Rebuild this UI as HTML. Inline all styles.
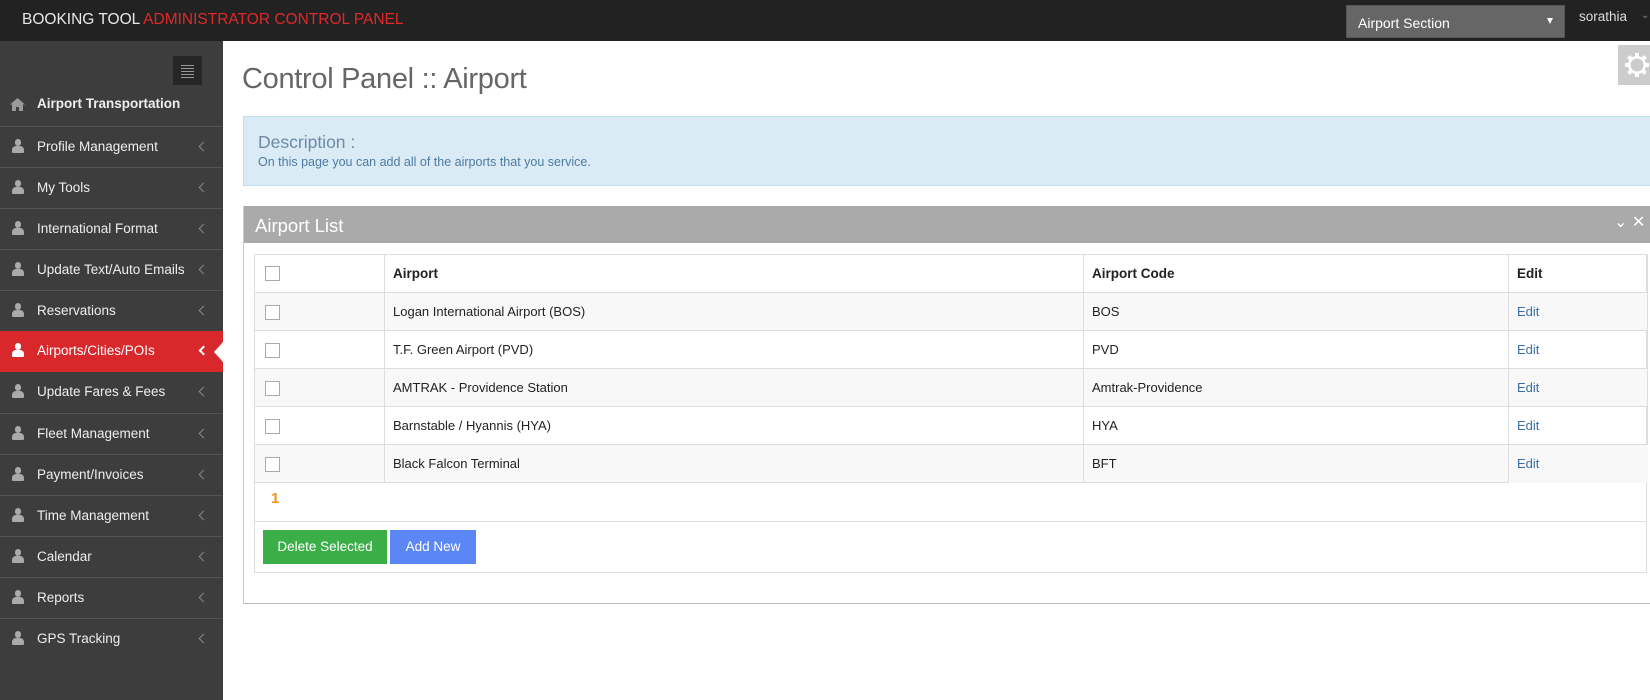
<!DOCTYPE html>
<html><head><meta charset="utf-8"><style>
*{box-sizing:border-box;margin:0;padding:0}
body{width:1650px;height:700px;overflow:hidden;background:#fff;font-family:"Liberation Sans",sans-serif;position:relative}
.hdr{position:absolute;left:0;top:0;width:1650px;height:41px;background:#222}
.brand{position:absolute;left:22px;top:11px;font-size:15.5px;color:#e8e8e8;letter-spacing:0}
.brand span{color:#e0282a}
.sel{position:absolute;left:1346px;top:5px;width:219px;height:33px;background:#666;border:1px solid #555;color:#fff;font-size:14px;padding:9px 11px}
.sel i{position:absolute;right:11px;top:12px;width:0;height:0;border-left:3.5px solid transparent;border-right:3.5px solid transparent;border-top:6px solid #fff}
.user{position:absolute;left:1579px;top:9px;color:#ddd;font-size:13.5px}
.user i{position:absolute;left:62px;top:1px;color:#888;font-size:10px;font-style:normal}
.side{position:absolute;left:0;top:41px;width:223px;height:659px;background:#3d3d3d}
.ham{position:absolute;left:173px;top:15px;width:29px;height:29px;background:#262626}
.ham b{position:absolute;left:8px;width:13px;height:1px;background:#999}
.item{position:absolute;left:0;width:223px;height:41px;border-top:1px solid #555;color:#eee;font-size:13.5px}
.item .t{position:absolute;left:37px;top:12px}
.item .ic{position:absolute;left:12px;top:12px;width:12px;height:14px}
.item .ic:before{content:"";position:absolute;left:3px;top:0;width:6px;height:7px;border-radius:3px;background:#aaa}
.item .ic:after{content:"";position:absolute;left:0;top:7px;width:12px;height:7px;border-radius:4px 4px 1px 1px;background:#aaa}
.item .ar{position:absolute;left:200px;top:16px;width:7px;height:7px;border-left:1px solid #888;border-bottom:1px solid #888;transform:rotate(45deg)}
.item.act{background:#d9282b;border-top:none;color:#fff}
.item.act .ic:before,.item.act .ic:after{background:#fff}
.item.act .ar{border-color:#fff;border-width:2px}
.item.act .notch{position:absolute;right:0;top:11px;width:0;height:0;border-top:10px solid transparent;border-bottom:10px solid transparent;border-right:9px solid #fff}
.title{position:absolute;left:242px;top:63px;font-size:29px;color:#666;font-weight:normal;letter-spacing:-0.3px}
.desc{position:absolute;left:243px;top:116px;width:1420px;height:70px;background:#daebf5;border:1px solid #bfe0f0}
.desc .h{position:absolute;left:14px;top:15px;font-size:17.5px;color:#6b8aa8}
.desc .p{position:absolute;left:14px;top:38px;font-size:12.5px;color:#4d7aa3}
.panel{position:absolute;left:243px;top:206px;width:1420px;height:398px;border-left:1px solid #ccc;border-bottom:1px solid #bbb}
.ph{position:absolute;left:0;top:0;width:100%;height:37px;background:#aaa;color:#fff;font-size:18.5px;padding:9px 11px}
.ph .c{position:absolute;left:1370px;top:6px;font-size:16px}
.box{position:absolute;left:254px;top:254px;width:1393px;height:319px;border:1px solid #ddd}
table{position:absolute;left:254px;top:254px;border-collapse:collapse;font-size:13px;color:#222}
td{height:38px;border:1px solid #ddd;padding:0 8px;vertical-align:middle}
tr.o td{background:#f8f8f8}
th{height:38px;border:1px solid #ddd;padding:0 8px;text-align:left;font-weight:bold;font-size:13.5px;color:#222}
.cb{display:inline-block;width:15px;height:15px;border:1px solid #aaa;background:#fff;margin-left:2px;vertical-align:middle}
.e{color:#3a6fa6}
.pg{position:absolute;left:271px;top:490px;color:#f0901e;font-size:15px;font-weight:bold}
.sep{position:absolute;left:254px;top:521px;width:1393px;height:1px;background:#ddd}
.btn{position:absolute;top:530px;height:34px;color:#fff;font-size:13.5px;padding-top:9px;text-align:center}
.gear{position:absolute;left:1618px;top:45px;width:32px;height:40px;background:#ccc}
</style></head><body>
<div class="hdr">
<div class="brand">BOOKING TOOL <span>ADMINISTRATOR CONTROL PANEL</span></div>
<div class="sel">Airport Section<i></i></div>
<div class="user">sorathia<i>&#8964;</i></div>
</div>
<div class="side">
<div class="ham"><b style="top:9px"></b><b style="top:12px"></b><b style="top:15px"></b><b style="top:18px"></b><b style="top:21px"></b></div>
</div>
<div class="item" style="top:86px;border-top:none;height:40px"><svg style="position:absolute;left:10px;top:12px" width="15" height="13" viewBox="0 0 15 13"><path d="M7.5 0L0 6.5h2V13h4V9h3v4h4V6.5h2z" fill="#999"/></svg><span class="t" style="font-weight:bold;top:10px">Airport Transportation</span></div>
<div class="item" style="top:126px"><i class="ic"></i><span class="t">Profile Management</span><i class="ar"></i></div>
<div class="item" style="top:167px"><i class="ic"></i><span class="t">My Tools</span><i class="ar"></i></div>
<div class="item" style="top:208px"><i class="ic"></i><span class="t">International Format</span><i class="ar"></i></div>
<div class="item" style="top:249px"><i class="ic"></i><span class="t">Update Text/Auto Emails</span><i class="ar"></i></div>
<div class="item" style="top:290px"><i class="ic"></i><span class="t">Reservations</span><i class="ar"></i></div>
<div class="item act" style="top:331px"><i class="ic"></i><span class="t">Airports/Cities/POIs</span><i class="ar"></i><i class="notch"></i></div>
<div class="item" style="top:372px;border-top:none"><i class="ic"></i><span class="t">Update Fares &amp; Fees</span><i class="ar"></i></div>
<div class="item" style="top:413px"><i class="ic"></i><span class="t">Fleet Management</span><i class="ar"></i></div>
<div class="item" style="top:454px"><i class="ic"></i><span class="t">Payment/Invoices</span><i class="ar"></i></div>
<div class="item" style="top:495px"><i class="ic"></i><span class="t">Time Management</span><i class="ar"></i></div>
<div class="item" style="top:536px"><i class="ic"></i><span class="t">Calendar</span><i class="ar"></i></div>
<div class="item" style="top:577px"><i class="ic"></i><span class="t">Reports</span><i class="ar"></i></div>
<div class="item" style="top:618px"><i class="ic"></i><span class="t">GPS Tracking</span><i class="ar"></i></div>

<div class="gear"><svg width="32" height="40" viewBox="0 0 32 40"><g transform="translate(19,20)" fill="#fff"><circle r="9"/><rect x="-2" y="-12" width="4" height="24"/><rect x="-12" y="-2" width="24" height="4"/><rect x="-2" y="-12" width="4" height="24" transform="rotate(45)"/><rect x="-2" y="-12" width="4" height="24" transform="rotate(-45)"/><circle r="6.5" fill="#ccc"/></g></svg></div>
<div class="title">Control Panel :: Airport</div>
<div class="desc"><div class="h">Description :</div><div class="p">On this page you can add all of the airports that you service.</div></div>
<div class="panel"><div class="ph">Airport List<span class="c">&#8964; &#10005;</span></div></div>
<div class="box"></div>
<table>
<tr><th style="width:130px"><span class="cb"></span></th><th style="width:699px">Airport</th><th style="width:425px">Airport Code</th><th style="width:139px">Edit</th></tr>
<tr class="o"><td><span class="cb"></span></td><td>Logan International Airport (BOS)</td><td>BOS</td><td class="e">Edit</td></tr>
<tr><td><span class="cb"></span></td><td>T.F. Green Airport (PVD)</td><td>PVD</td><td class="e">Edit</td></tr>
<tr class="o"><td><span class="cb"></span></td><td>AMTRAK - Providence Station</td><td>Amtrak-Providence</td><td class="e">Edit</td></tr>
<tr><td><span class="cb"></span></td><td>Barnstable / Hyannis (HYA)</td><td>HYA</td><td class="e">Edit</td></tr>
<tr class="o"><td><span class="cb"></span></td><td>Black Falcon Terminal</td><td>BFT</td><td class="e" style="border:none">Edit</td></tr>
</table>
<div class="pg">1</div>
<div class="sep"></div>
<div class="btn" style="left:263px;width:124px;background:#3cae48">Delete Selected</div>
<div class="btn" style="left:390px;width:86px;background:#5b87f6">Add New</div>
</body></html>
